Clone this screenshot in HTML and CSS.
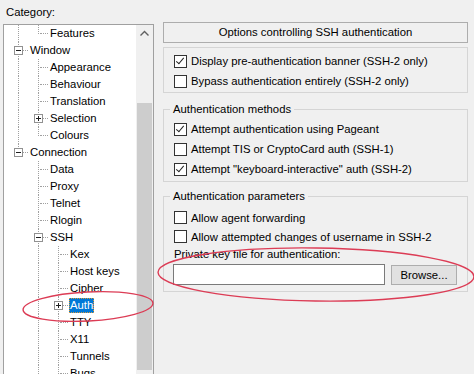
FILE: index.html
```html
<!DOCTYPE html>
<html>
<head>
<meta charset="utf-8">
<link rel="stylesheet" href="styles.css">
</head>
<body>
<div class="window">
  <div class="left">
    <div class="cat-label">Category:</div>
    <div class="tree-box">
      <div class="tree">
        <div class="row"><span class="c pipe"></span><span class="c corner"></span><span class="t">Features</span></div>
        <div class="row"><span class="c tee"><span class="exp minus"></span></span><span class="t">Window</span></div>
        <div class="row"><span class="c pipe"></span><span class="c tee"></span><span class="t">Appearance</span></div>
        <div class="row"><span class="c pipe"></span><span class="c tee"></span><span class="t">Behaviour</span></div>
        <div class="row"><span class="c pipe"></span><span class="c tee"></span><span class="t">Translation</span></div>
        <div class="row"><span class="c pipe"></span><span class="c tee"><span class="exp plus"></span></span><span class="t">Selection</span></div>
        <div class="row"><span class="c pipe"></span><span class="c corner"></span><span class="t">Colours</span></div>
        <div class="row"><span class="c corner"><span class="exp minus"></span></span><span class="t">Connection</span></div>
        <div class="row"><span class="c"></span><span class="c tee"></span><span class="t">Data</span></div>
        <div class="row"><span class="c"></span><span class="c tee"></span><span class="t">Proxy</span></div>
        <div class="row"><span class="c"></span><span class="c tee"></span><span class="t">Telnet</span></div>
        <div class="row"><span class="c"></span><span class="c tee"></span><span class="t">Rlogin</span></div>
        <div class="row"><span class="c"></span><span class="c tee"><span class="exp minus"></span></span><span class="t">SSH</span></div>
        <div class="row"><span class="c"></span><span class="c pipe"></span><span class="c tee"></span><span class="t">Kex</span></div>
        <div class="row"><span class="c"></span><span class="c pipe"></span><span class="c tee"></span><span class="t">Host keys</span></div>
        <div class="row"><span class="c"></span><span class="c pipe"></span><span class="c tee"></span><span class="t">Cipher</span></div>
        <div class="row"><span class="c"></span><span class="c pipe"></span><span class="c tee"><span class="exp plus"></span></span><span class="t sel">Auth</span></div>
        <div class="row"><span class="c"></span><span class="c pipe"></span><span class="c tee"></span><span class="t">TTY</span></div>
        <div class="row"><span class="c"></span><span class="c pipe"></span><span class="c tee"></span><span class="t">X11</span></div>
        <div class="row"><span class="c"></span><span class="c pipe"></span><span class="c tee"></span><span class="t">Tunnels</span></div>
        <div class="row"><span class="c"></span><span class="c pipe"></span><span class="c tee"></span><span class="t">Bugs</span></div>
      </div>
      <div class="scrollbar">
        <div class="arrow">
          <svg width="17" height="17" viewBox="0 0 17 17"><path d="M4.5 10.5 L8.5 6.5 L12.5 10.5" fill="none" stroke="#606060" stroke-width="1.4"/></svg>
        </div>
        <div class="track"><div class="thumb"></div></div>
      </div>
    </div>
  </div>

  <div class="right">
    <div class="header">Options controlling SSH authentication</div>

    <div class="group g1">
      <div class="row-cb"><span class="cb checked"></span><span>Display pre-authentication banner (SSH-2 only)</span></div>
      <div class="row-cb"><span class="cb"></span><span>Bypass authentication entirely (SSH-2 only)</span></div>
    </div>

    <div class="group g2">
      <div class="gtitle">Authentication methods</div>
      <div class="row-cb"><span class="cb checked"></span><span>Attempt authentication using Pageant</span></div>
      <div class="row-cb"><span class="cb"></span><span>Attempt TIS or CryptoCard auth (SSH-1)</span></div>
      <div class="row-cb"><span class="cb checked"></span><span>Attempt "keyboard-interactive" auth (SSH-2)</span></div>
    </div>

    <div class="group g3">
      <div class="gtitle">Authentication parameters</div>
      <div class="row-cb"><span class="cb"></span><span>Allow agent forwarding</span></div>
      <div class="row-cb"><span class="cb"></span><span>Allow attempted changes of username in SSH-2</span></div>
      <div class="keylabel">Private key file for authentication:</div>
      <div class="keyrow">
        <div class="textbox"></div>
        <div class="button">Browse...</div>
      </div>
    </div>
  </div>

  <svg class="annot" width="474" height="374" viewBox="0 0 474 374">
    <ellipse cx="88" cy="306.5" rx="65" ry="14.5" transform="rotate(-3 88 306.5)"/>
    <ellipse cx="316" cy="274.5" rx="158" ry="26.5" transform="rotate(0.8 316 274.5)"/>
  </svg>
</div>
</body>
</html>
```

FILE: styles.css
```css
html, body {
  margin: 0;
  padding: 0;
  background: #f0f0f0;
}

.window {
  position: relative;
  display: flex;
  width: 474px;
  height: 374px;
  overflow: hidden;
  background: #f0f0f0;
  font-family: "Liberation Sans", Arial, sans-serif;
  font-size: 11.3px;
  color: #000;
}

/* ---------- left: category tree ---------- */
.left {
  width: 151px;
  flex: none;
  padding-left: 3px;
  padding-top: 4px;
  display: flex;
  flex-direction: column;
}

.cat-label {
  height: 16px;
  line-height: 16px;
  padding-left: 3px;
  margin-bottom: 4px;
}

.tree-box {
  display: flex;
  height: 362px;
  border: 1px solid #a0a0a0;
  background: #fff;
}

.tree {
  flex: 1;
  padding-left: 4px;
  overflow: hidden;
}

.row {
  display: flex;
  align-items: center;
  height: 17px;
  white-space: nowrap;
}

.c {
  position: relative;
  flex: none;
  width: 20px;
  height: 17px;
}

.c.pipe::before,
.c.tee::before,
.c.corner::before {
  content: "";
  position: absolute;
  left: 10px;
  top: 0;
  bottom: 0;
  border-left: 1px dotted #a0a0a0;
}

.c.corner::before {
  bottom: 8px;
}

.c.tee::after,
.c.corner::after {
  content: "";
  position: absolute;
  left: 12px;
  top: 8px;
  width: 8px;
  border-top: 1px dotted #a0a0a0;
}

.exp {
  position: absolute;
  left: 6px;
  top: 4px;
  width: 7px;
  height: 7px;
  border: 1px solid #919191;
  background: #fff;
  z-index: 1;
}

.exp::before {
  content: "";
  position: absolute;
  left: 1px;
  top: 3px;
  width: 5px;
  height: 1px;
  background: #1e1e1e;
}

.exp.plus::after {
  content: "";
  position: absolute;
  left: 3px;
  top: 1px;
  width: 1px;
  height: 5px;
  background: #1e1e1e;
}

.t {
  margin-left: 2px;
  line-height: 15px;
}

.t.sel {
  background: #0078d7;
  color: #fff;
  padding: 0 1px;
  margin-left: 1px;
  outline: 1px dotted #d99a3c;
  outline-offset: -1px;
}

.scrollbar {
  width: 17px;
  flex: none;
  background: #f0f0f0;
  display: flex;
  flex-direction: column;
}

.arrow {
  height: 17px;
}

.arrow svg {
  display: block;
}

.track {
  flex: 1;
  padding-top: 61px;
}

.thumb {
  margin: 0 1px;
  height: 267px;
  background: #cdcdcd;
}

/* ---------- right: options panel ---------- */
.right {
  flex: 1;
  padding: 22px 6px 0 9px;
  display: flex;
  flex-direction: column;
}

.header {
  height: 19px;
  line-height: 19px;
  border: 1px solid #adadad;
  text-align: center;
}

.group {
  border: 1px solid #d5d5d5;
  display: flex;
  flex-direction: column;
}

.g1 {
  margin-top: 4px;
  padding: 3px 0 1px 10px;
}

.g2 {
  margin-top: 16px;
  padding: 0 0 2px 10px;
}

.g3 {
  margin-top: 14px;
  padding: 0 0 6px 10px;
}

.gtitle {
  align-self: flex-start;
  margin: -8px 0 0 -4px;
  padding: 0 3px;
  height: 14px;
  line-height: 14px;
  background: #f0f0f0;
}

.g2 .gtitle {
  margin-bottom: 3px;
}

.g3 .gtitle {
  margin-bottom: 5px;
}

.row-cb {
  display: flex;
  align-items: center;
  height: 20px;
  flex: none;
  white-space: nowrap;
}

.g3 .row-cb {
  height: 19px;
}

.cb {
  position: relative;
  flex: none;
  width: 11px;
  height: 11px;
  border: 1px solid #333;
  background: #fff;
  margin-right: 4px;
}

.cb.checked::after {
  content: "";
  position: absolute;
  left: 3px;
  top: 0px;
  width: 3px;
  height: 7px;
  border-right: 1.5px solid #222;
  border-bottom: 1.5px solid #222;
  transform: rotate(40deg);
}

.keylabel {
  height: 18px;
  line-height: 16px;
  flex: none;
}

.keyrow {
  display: flex;
  align-items: center;
  height: 21px;
  flex: none;
  margin-left: -1px;
}

.textbox {
  width: 210px;
  height: 19px;
  border: 1px solid #7a7a7a;
  background: #fff;
}

.button {
  margin-left: 6px;
  width: 64px;
  height: 18px;
  line-height: 18px;
  border: 1px solid #adadad;
  background: #e1e1e1;
  text-align: center;
}

/* ---------- annotation overlay ---------- */
.annot {
  position: absolute;
  left: 0;
  top: 0;
  pointer-events: none;
}

.annot ellipse {
  fill: none;
  stroke: #dc3c55;
  stroke-width: 1.4;
}
```
